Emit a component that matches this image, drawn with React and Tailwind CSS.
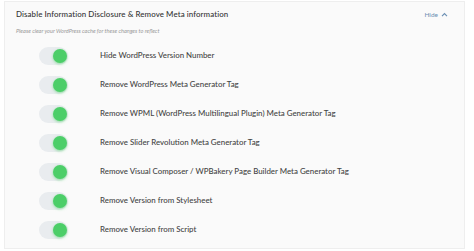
import React from "react";

const items = [
  "Hide WordPress Version Number",
  "Remove WordPress Meta Generator Tag",
  "Remove WPML (WordPress Multilingual Plugin) Meta Generator Tag",
  "Remove Slider Revolution Meta Generator Tag",
  "Remove Visual Composer / WPBakery Page Builder Meta Generator Tag",
  "Remove Version from Stylesheet",
  "Remove Version from Script",
];

const Toggle = () => (
  <div className="relative w-[29px] h-[18px] rounded-full bg-[#e9ecef] shrink-0">
    <div className="absolute right-[1px] top-[2px] w-[14px] h-[14px] rounded-full bg-[#4cce68] shadow-[0_1px_3px_rgba(76,206,104,0.6)]" />
  </div>
);

export default function App() {
  return (
    <div className="w-[474px] h-[251px] bg-white pt-[1px] pl-[4px] font-['Lato',sans-serif]">
      <div className="w-[461px] h-[248px] bg-[#fafafa] border border-[#eeeeee]">
        <div className="flex items-center justify-between pl-[11px] pr-[16px] pt-[5px] h-[20px]">
          <span className="text-[7.9px] font-medium tracking-[0.1px] text-[#333]">
            Disable Information Disclosure &amp; Remove Meta information
          </span>
          <span className="flex items-center gap-[3px] text-[6.5px] text-[#6b8fb3]">
            Hide
            <svg width="7" height="5" viewBox="0 0 8 6" fill="none">
              <path d="M1 5 L4 2 L7 5" stroke="#6b8fb3" strokeWidth="1.4" />
            </svg>
          </span>
        </div>
        <div className="pl-[11px] mt-[5px] text-[5.6px] italic text-[#999]">
          Please clear your WordPress cache for these changes to reflect
        </div>
        <div className="flex flex-col mt-[6px]">
          {items.map((t) => (
            <div key={t} className="flex items-center h-[29px] pl-[34px]">
              <Toggle />
              <span className="ml-[32px] text-[7.9px] font-medium text-[#444]">{t}</span>
            </div>
          ))}
        </div>
      </div>
    </div>
  );
}
